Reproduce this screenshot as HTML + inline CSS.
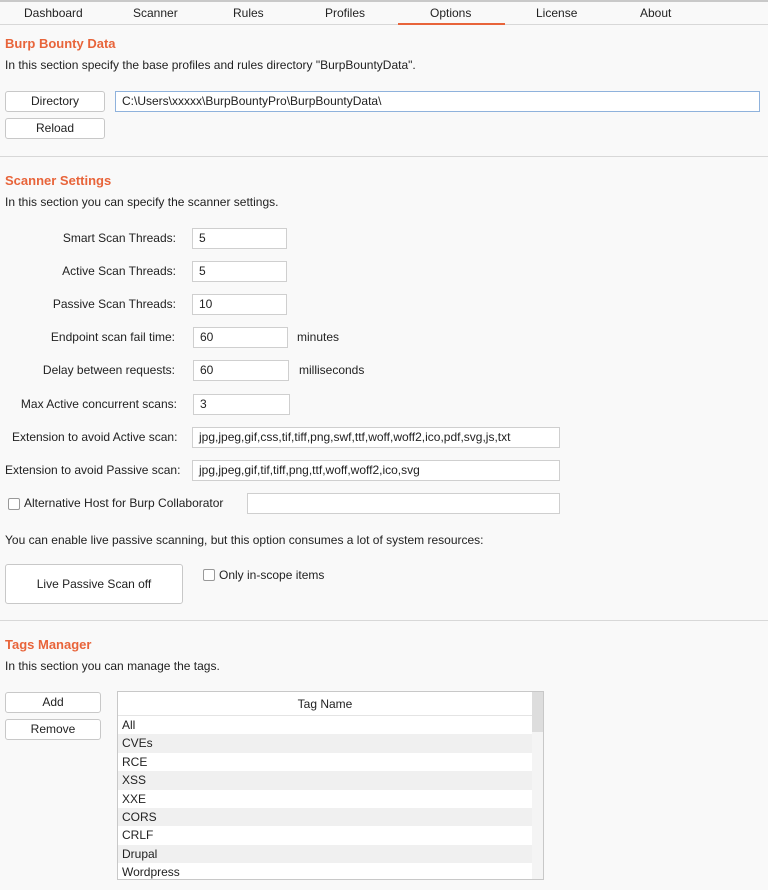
<!DOCTYPE html>
<html><head><meta charset="utf-8"><style>
*{box-sizing:border-box;margin:0;padding:0}
body{width:768px;height:890px;background:#f9f9f9;font-family:"Liberation Sans",sans-serif;font-size:12px;color:#222;position:relative;overflow:hidden}
.a{position:absolute;white-space:nowrap}
.t{line-height:14px}
.h{color:#e8643a;font-weight:bold;font-size:13px}
.btn{position:absolute;background:#fff;border:1px solid #c8c8c8;border-radius:3px;text-align:center;line-height:19px}
.in{position:absolute;background:#fff;border:1px solid #cfcfcf;height:21px;line-height:19px;padding-left:6px}
.lab{position:absolute;text-align:right;line-height:21px;white-space:nowrap}
.cb{position:absolute;width:12px;height:12px;border:1px solid #999;background:#fff;border-radius:2px}
.sep{position:absolute;left:0;width:768px;height:1px;background:#d8d8d8}
.row{height:18.4px;line-height:18.4px;padding-left:4px}
.g{background:#f0f0f0}
</style></head><body>
<div class="a" style="left:0;top:0;width:768px;height:2px;background:#c9c9c9"></div>
<div class="a" style="left:0;top:24px;width:768px;height:1px;background:#d8d8d8"></div>
<div class="a" style="left:398px;top:23px;width:107px;height:2px;background:#e8643a"></div>
<div class="a t" style="left:24px;top:6px">Dashboard</div>
<div class="a t" style="left:133px;top:6px">Scanner</div>
<div class="a t" style="left:233px;top:6px">Rules</div>
<div class="a t" style="left:325px;top:6px">Profiles</div>
<div class="a t" style="left:430px;top:6px">Options</div>
<div class="a t" style="left:536px;top:6px">License</div>
<div class="a t" style="left:640px;top:6px">About</div>

<div class="a h" style="left:5px;top:36px">Burp Bounty Data</div>
<div class="a t" style="left:5px;top:58px">In this section specify the base profiles and rules directory "BurpBountyData".</div>
<div class="btn" style="left:5px;top:91px;width:100px;height:21px">Directory</div>
<div class="in" style="left:115px;top:91px;width:645px;border-color:#8fb2dc">C:\Users\xxxxx\BurpBountyPro\BurpBountyData\</div>
<div class="btn" style="left:5px;top:118px;width:100px;height:21px">Reload</div>
<div class="sep" style="top:156px"></div>

<div class="a h" style="left:5px;top:173px">Scanner Settings</div>
<div class="a t" style="left:5px;top:195px">In this section you can specify the scanner settings.</div>
<div class="lab" style="right:592px;top:228px">Smart Scan Threads:</div><div class="in" style="left:192px;top:228px;width:95px">5</div>
<div class="lab" style="right:592px;top:261px">Active Scan Threads:</div><div class="in" style="left:192px;top:261px;width:95px">5</div>
<div class="lab" style="right:592px;top:294px">Passive Scan Threads:</div><div class="in" style="left:192px;top:294px;width:95px">10</div>
<div class="lab" style="right:593px;top:327px">Endpoint scan fail time:</div><div class="in" style="left:193px;top:327px;width:95px">60</div><div class="lab" style="left:297px;top:327px">minutes</div>
<div class="lab" style="right:593px;top:360px">Delay between requests:</div><div class="in" style="left:193px;top:360px;width:96px">60</div><div class="lab" style="left:299px;top:360px">milliseconds</div>
<div class="lab" style="right:591px;top:394px">Max Active concurrent scans:</div><div class="in" style="left:193px;top:394px;width:97px">3</div>
<div class="lab" style="left:12px;top:427px">Extension to avoid Active scan:</div><div class="in" style="left:192px;top:427px;width:368px">jpg,jpeg,gif,css,tif,tiff,png,swf,ttf,woff,woff2,ico,pdf,svg,js,txt</div>
<div class="lab" style="left:5px;top:460px">Extension to avoid Passive scan:</div><div class="in" style="left:192px;top:460px;width:368px">jpg,jpeg,gif,tif,tiff,png,ttf,woff,woff2,ico,svg</div>
<div class="cb" style="left:8px;top:498px"></div><div class="lab" style="left:24px;top:493px">Alternative Host for Burp Collaborator</div>
<div class="in" style="left:247px;top:493px;width:313px"></div>
<div class="a t" style="left:5px;top:533px">You can enable live passive scanning, but this option consumes a lot of system resources:</div>
<div class="btn" style="left:5px;top:564px;width:178px;height:40px;line-height:38px">Live Passive Scan off</div>
<div class="cb" style="left:203px;top:569px"></div><div class="a t" style="left:219px;top:568px">Only in-scope items</div>
<div class="sep" style="top:620px"></div>

<div class="a h" style="left:5px;top:637px">Tags Manager</div>
<div class="a t" style="left:5px;top:659px">In this section you can manage the tags.</div>
<div class="btn" style="left:5px;top:692px;width:96px;height:21px">Add</div>
<div class="btn" style="left:5px;top:719px;width:96px;height:21px">Remove</div>
<div class="a" style="left:117px;top:691px;width:427px;height:189px;border:1px solid #c8c8c8;background:#fff;overflow:hidden">
<div style="height:24px;line-height:24px;text-align:center;border-bottom:1px solid #e4e4e4;width:414px">Tag Name</div>
<div style="position:absolute;right:0;top:0;width:11px;height:187px;background:#f4f4f4"><div style="height:40px;background:#ddd"></div></div>
<div style="width:414px">
<div class="row">All</div><div class="row g">CVEs</div><div class="row">RCE</div><div class="row g">XSS</div><div class="row">XXE</div><div class="row g">CORS</div><div class="row">CRLF</div><div class="row g">Drupal</div><div class="row">Wordpress</div>
</div></div>
</body></html>
